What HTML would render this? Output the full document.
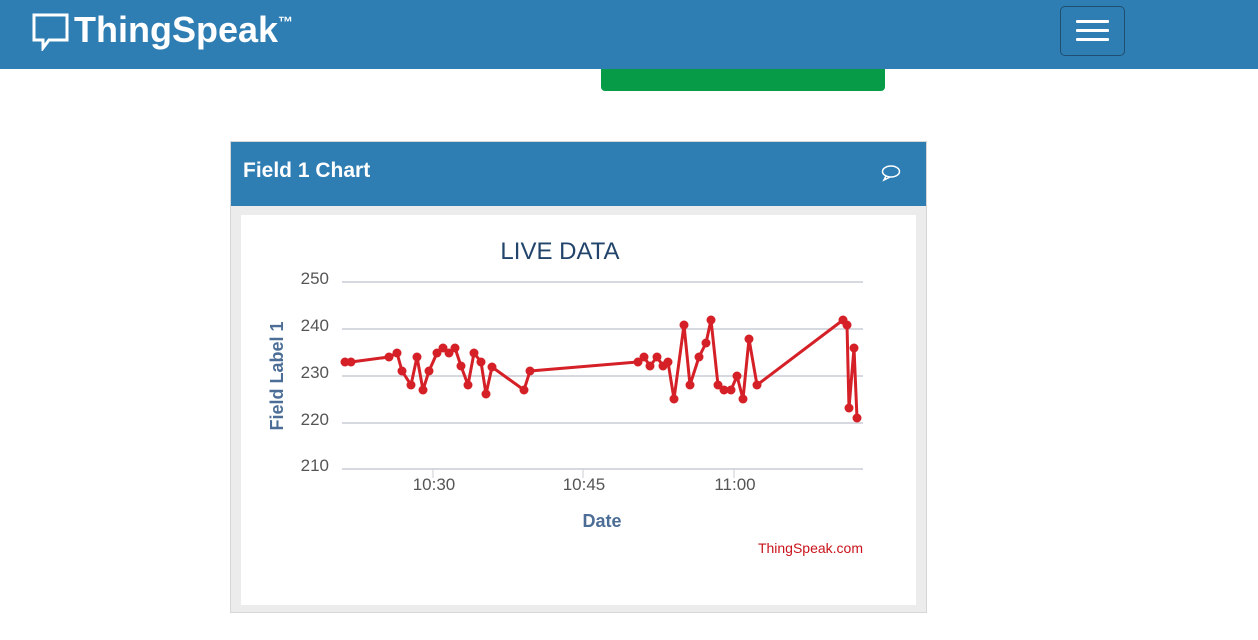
<!DOCTYPE html><html><head><style>
body{margin:0;width:1258px;height:640px;background:#fff;font-family:"Liberation Sans",sans-serif;position:relative;overflow:hidden}
.nav{position:absolute;left:0;top:0;width:1258px;height:69px;background:#2e7eb3}
.logo{position:absolute;left:74px;top:9px;color:#fff;font-weight:bold;font-size:36px;letter-spacing:0}
.tm{font-size:15px;vertical-align:top;position:relative;top:5px}
.btn{position:absolute;left:1060px;top:6px;width:65px;height:50px;border:1.5px solid #1f4f70;border-radius:5px;box-sizing:border-box}
.btn i{position:absolute;left:15px;width:33px;height:3px;background:#fff;border-radius:1px}
.green{position:absolute;left:601px;top:69px;width:284px;height:22px;background:#079b47;border-radius:0 0 4px 4px}
.panel{position:absolute;left:230px;top:141px;width:697px;height:472px;border:1px solid #d6d6d6;box-sizing:border-box;background:#ececec}
.ph{height:64px;background:#2e7eb3;color:#fff;font-weight:bold;font-size:21px;line-height:58px;padding-left:12px}
.inner{position:absolute;left:10px;top:73px;width:675px;height:390px;background:#fff}
</style></head><body>
<div class="nav">
<svg style="position:absolute;left:32px;top:13px" width="38" height="38" viewBox="0 0 38 38"><path d="M2 2H35V27H17L11 35V27H2Z" fill="none" stroke="#fff" stroke-width="3"/></svg>
<div class="logo">ThingSpeak<span class="tm">™</span></div>
<div class="btn"><i style="top:13px"></i><i style="top:22px"></i><i style="top:31px"></i></div>
</div>
<div class="green"></div>
<div class="panel"><div class="ph">Field 1 Chart
<svg style="position:absolute;left:650px;top:22px" width="20" height="18" viewBox="0 0 20 18"><ellipse cx="10" cy="7.5" rx="8.5" ry="5.5" fill="none" stroke="#fff" stroke-width="1.5"/><path d="M5 12L3 16L9 13" fill="none" stroke="#fff" stroke-width="1.5"/></svg></div>
<div class="inner"></div></div>
<svg style="position:absolute;left:0;top:0" width="1258" height="640" font-family="Liberation Sans, sans-serif">
<text x="560" y="259" text-anchor="middle" font-size="24" fill="#22446b">LIVE DATA</text>
<g stroke="#c8cdd6" stroke-width="1.5"><line x1="342" y1="282" x2="863" y2="282"/><line x1="342" y1="329" x2="863" y2="329"/><line x1="342" y1="376" x2="863" y2="376"/><line x1="342" y1="423" x2="863" y2="423"/><line x1="342" y1="469" x2="863" y2="469"/></g>
<g stroke="#c8cdd6"><line x1="433" y1="469" x2="433" y2="478"/><line x1="583" y1="469" x2="583" y2="478"/><line x1="734" y1="469" x2="734" y2="478"/></g>
<g font-size="17" fill="#555" text-anchor="end"><text x="329" y="284">250</text><text x="329" y="331">240</text><text x="329" y="378">230</text><text x="329" y="425">220</text><text x="329" y="471">210</text></g>
<g font-size="17" fill="#555" text-anchor="middle"><text x="434" y="490">10:30</text><text x="584" y="490">10:45</text><text x="735" y="490">11:00</text></g>
<text x="602" y="527" text-anchor="middle" font-size="18" font-weight="bold" fill="#4c6e96">Date</text>
<text transform="translate(283,376) rotate(-90)" text-anchor="middle" font-size="18" font-weight="bold" fill="#4c6e96">Field Label 1</text>
<text x="863" y="553" text-anchor="end" font-size="14" fill="#c9131b">ThingSpeak.com</text>
<polyline fill="none" stroke="#d42026" stroke-width="3" stroke-linejoin="round" points="345,362 351,362 389,357 397,353 402,371 411,385 417,357 423,390 429,371 437,353 443,348 449,353 455,348 461,366 468,385 474,353 481,362 486,394 492,367 524,390 530,371 638,362 644,357 650,366 657,357 663,366 668,362 674,399 684,325 690,385 699,357 706,343 711,320 718,385 724,390 731,390 737,376 743,399 749,339 757,385 843,320 847,325 849,408 854,348 857,418"/>
<g fill="#d42026"><circle cx="345" cy="362" r="4.5"/><circle cx="351" cy="362" r="4.5"/><circle cx="389" cy="357" r="4.5"/><circle cx="397" cy="353" r="4.5"/><circle cx="402" cy="371" r="4.5"/><circle cx="411" cy="385" r="4.5"/><circle cx="417" cy="357" r="4.5"/><circle cx="423" cy="390" r="4.5"/><circle cx="429" cy="371" r="4.5"/><circle cx="437" cy="353" r="4.5"/><circle cx="443" cy="348" r="4.5"/><circle cx="449" cy="353" r="4.5"/><circle cx="455" cy="348" r="4.5"/><circle cx="461" cy="366" r="4.5"/><circle cx="468" cy="385" r="4.5"/><circle cx="474" cy="353" r="4.5"/><circle cx="481" cy="362" r="4.5"/><circle cx="486" cy="394" r="4.5"/><circle cx="492" cy="367" r="4.5"/><circle cx="524" cy="390" r="4.5"/><circle cx="530" cy="371" r="4.5"/><circle cx="638" cy="362" r="4.5"/><circle cx="644" cy="357" r="4.5"/><circle cx="650" cy="366" r="4.5"/><circle cx="657" cy="357" r="4.5"/><circle cx="663" cy="366" r="4.5"/><circle cx="668" cy="362" r="4.5"/><circle cx="674" cy="399" r="4.5"/><circle cx="684" cy="325" r="4.5"/><circle cx="690" cy="385" r="4.5"/><circle cx="699" cy="357" r="4.5"/><circle cx="706" cy="343" r="4.5"/><circle cx="711" cy="320" r="4.5"/><circle cx="718" cy="385" r="4.5"/><circle cx="724" cy="390" r="4.5"/><circle cx="731" cy="390" r="4.5"/><circle cx="737" cy="376" r="4.5"/><circle cx="743" cy="399" r="4.5"/><circle cx="749" cy="339" r="4.5"/><circle cx="757" cy="385" r="4.5"/><circle cx="843" cy="320" r="4.5"/><circle cx="847" cy="325" r="4.5"/><circle cx="849" cy="408" r="4.5"/><circle cx="854" cy="348" r="4.5"/><circle cx="857" cy="418" r="4.5"/></g>
</svg>
</body></html>
